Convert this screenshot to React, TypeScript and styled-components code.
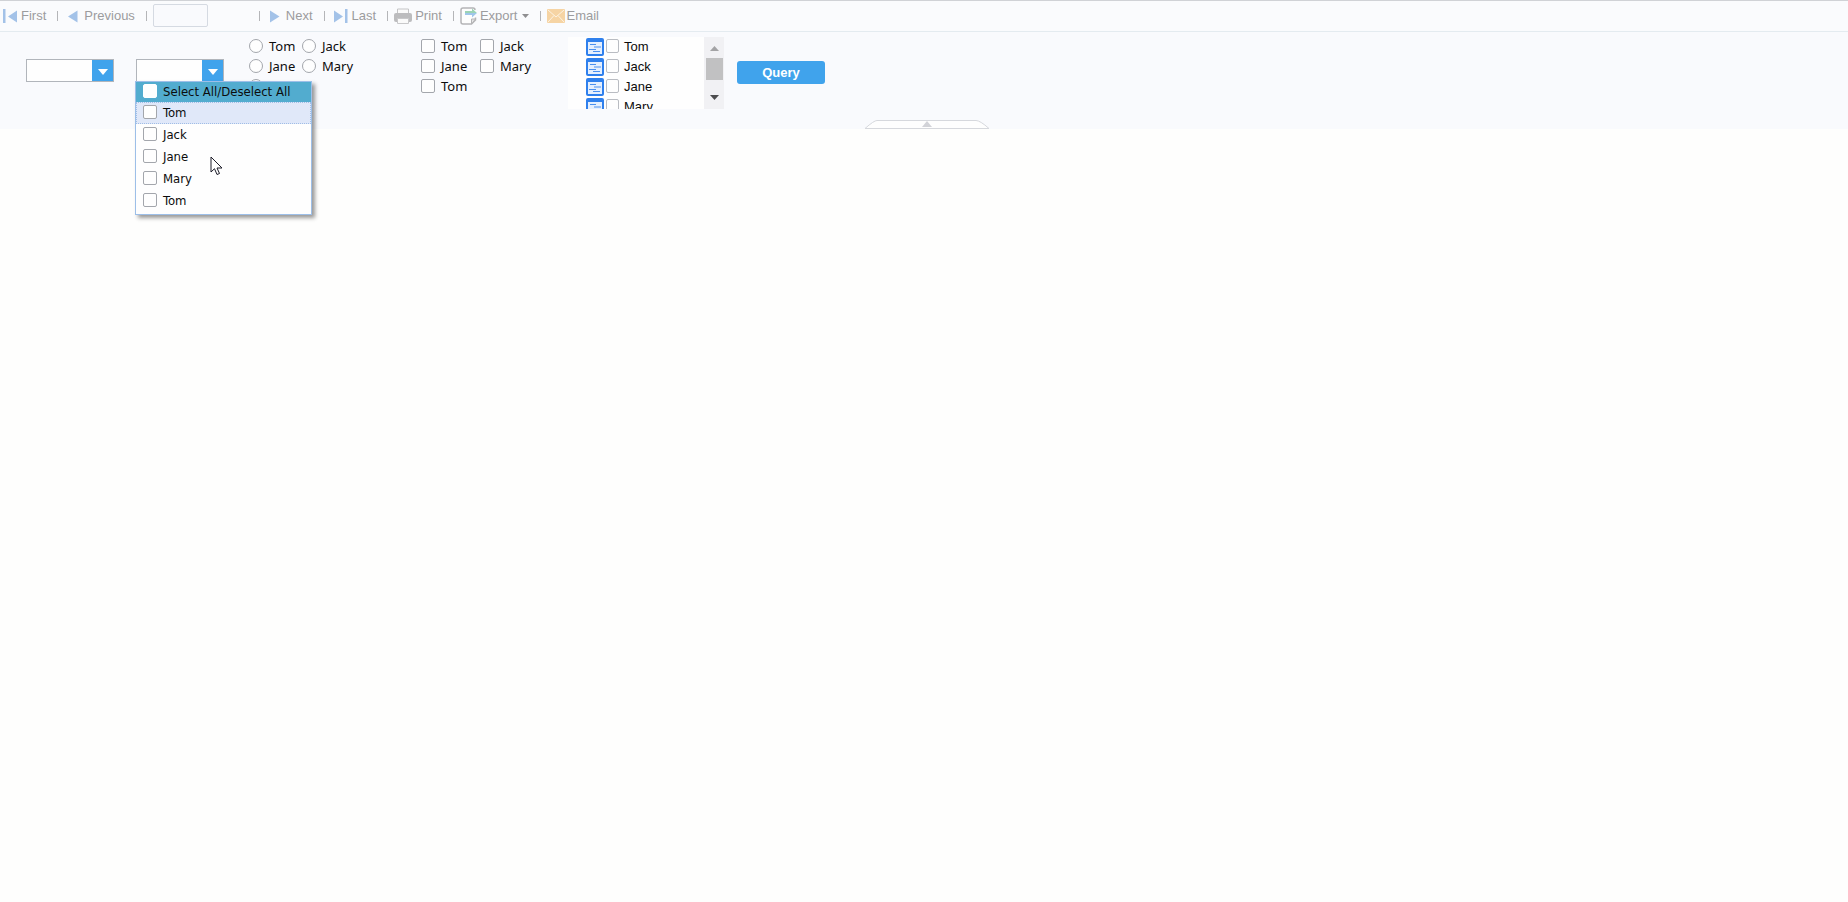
import React from "react";
import styled, { createGlobalStyle, css } from "styled-components";

const Global = createGlobalStyle`
  *, *::before, *::after { box-sizing: border-box; }
  body {
    margin: 0;
    background: #fefefd;
    color: #0c0c0c;
    font-family: "Liberation Sans", Arial, sans-serif;
    font-size: 13px;
  }
  button, input, select { font: inherit; margin: 0; padding: 0; }
`;

const Page = styled.main`
  min-height: 100vh;
`;

const Toolbar = styled.header`
  display: flex;
  align-items: center;
  height: 32px;
  padding-left: 3px;
  border-top: 1px solid #d0d2d6;
  border-bottom: 1px solid #e4ebf0;
  background: #fafbfd;
`;

const ToolButton = styled.button<{ $gap?: number }>`
  display: flex;
  align-items: center;
  gap: ${(p) => p.$gap ?? 4}px;
  height: 24px;
  border: 0;
  background: none;
  color: #9c9c9e;
  line-height: 16px;
  white-space: nowrap;
  svg { display: block; flex: none; }
`;

const Divider = styled.span<{ $after?: number }>`
  width: 1px;
  height: 10px;
  margin: 0 ${(p) => p.$after ?? 6}px 0 11px;
  background: #b4b5b8;
`;

const PageInput = styled.input`
  width: 55px;
  height: 23px;
  margin: 0 40px 2px 0;
  border: 1px solid #d5dae2;
  border-radius: 2px;
  background: #f9fafd;
`;

const Panel = styled.form`
  position: relative;
  display: flex;
  align-items: flex-start;
  height: 97px;
  padding: 5px 0 0 26px;
  background: #f9fafd;
`;

const Combo = styled.div`
  position: relative;
  width: 88px;
  margin: 22px 22px 0 0;
`;

const Select = styled.select`
  display: block;
  appearance: none;
  width: 100%;
  height: 23px;
  border: 1px solid #b1b5bb;
  border-radius: 0;
  background: #fefefe;
`;

const ComboArrow = styled.span`
  position: absolute;
  top: 1px;
  right: 1px;
  display: flex;
  align-items: center;
  justify-content: center;
  width: 21px;
  height: 21px;
  padding-top: 3px;
  background: #40a3ec;
  pointer-events: none;
`;

const Popup = styled.div`
  position: absolute;
  z-index: 2;
  top: 22px;
  left: -1px;
  width: 177px;
  height: 134px;
  border: 1px solid #9dbfe8;
  background: #fefefe;
  box-shadow: 3px 3px 4px rgba(0, 0, 0, 0.4);
`;

const PopupItem = styled.label<{ $kind?: "all" | "hover" }>`
  display: flex;
  align-items: center;
  gap: 6px;
  height: 22px;
  padding-left: 6px;
  font: 13px/16px "DejaVu Sans Condensed", "Noto Sans", sans-serif;
  white-space: nowrap;
  border: 1px solid transparent;
  input { margin-bottom: 3px; }
  ${(p) =>
    p.$kind === "all" &&
    css`
      height: 20px;
      background: #52accf;
      input { border-color: #fff; }
    `}
  ${(p) =>
    p.$kind === "hover" &&
    css`
      background: #e0e8f9;
      border: 1px dotted #a0bde6;
    `}
`;

const Check = styled.input`
  appearance: none;
  flex: none;
  width: 14px;
  height: 14px;
  border: 1px solid #a3a6ac;
  border-radius: ${(p) => (p.type === "radio" ? "50%" : "2px")};
  background: #fefefe;
`;

const OptionGrid = styled.fieldset<{ $cols: string; $width: number; $height: number }>`
  display: grid;
  grid-template-columns: ${(p) => p.$cols};
  grid-auto-rows: 20px;
  width: ${(p) => p.$width}px;
  height: ${(p) => p.$height}px;
  min-width: 0;
  margin: 0;
  padding: 0 0 0 3px;
  border: 0;
  overflow: hidden;
`;

const Option = styled.label`
  display: flex;
  align-items: center;
  gap: 6px;
  height: 19px;
  font: 13px/19px "Noto Sans", "Open Sans", sans-serif;
  white-space: nowrap;
  input { margin-bottom: 2px; }
`;

const Tree = styled.div`
  display: flex;
  width: 156px;
  height: 72px;
  overflow: hidden;
  background: #fefefe;
`;

const TreeList = styled.ul`
  flex: 1;
  margin: 0;
  padding: 0 0 0 18px;
  list-style: none;
`;

const TreeRow = styled.label`
  display: flex;
  align-items: center;
  height: 20px;
  line-height: 20px;
  svg { display: block; margin-right: 2px; }
  input { width: 13px; margin: 0 5px 2px 0; border-color: #b9bcc2; }
`;

const Scrollbar = styled.div`
  display: flex;
  flex-direction: column;
  align-items: center;
  width: 20px;
  background: #f1f1f4;
`;

const ScrollButton = styled.button<{ $dark?: boolean }>`
  display: flex;
  align-items: center;
  justify-content: center;
  width: 18px;
  height: 21px;
  padding-top: 2px;
  border: 0;
  background: none;
  color: ${(p) => (p.$dark ? "#4c4c4e" : "#a3a3a5")};
`;

const Thumb = styled.div`
  width: 17px;
  height: 22px;
  margin-bottom: 6px;
  background: #c1c1c2;
`;

const QueryButton = styled.button`
  width: 88px;
  height: 23px;
  margin: 24px 0 0 13px;
  border: 0;
  border-radius: 3px;
  background: #40a3ec;
  color: #fff;
  font-weight: bold;
`;

const Collapse = styled.button`
  position: absolute;
  bottom: 0;
  left: 50%;
  width: 126px;
  height: 9px;
  margin-left: -60px;
  border: 0;
  background: none;
  svg { display: block; }
`;

const Cursor = styled.svg`
  position: absolute;
  z-index: 3;
  top: 97px;
  left: 74px;
  pointer-events: none;
`;

const Triangle = ({ up }: { up?: boolean }) => (
  <svg width="9" height="5" viewBox="0 0 9 5" fill="currentColor">
    <path d={up ? "M0 5L4.500 0L9 5z" : "M0 0H9L4.500 5z"} />
  </svg>
);

const FirstIcon = () => (
  <svg width="14" height="14" fill="#a3c2e8">
    <path d="M0 0h2.500v14H0zM14 1.500v12L5 7.500z" />
  </svg>
);
const PrevIcon = () => (
  <svg width="10" height="14" fill="#a3c2e8"><path d="M9.500 1.500v12L0 7.500z" /></svg>
);
const NextIcon = () => (
  <svg width="10" height="14" fill="#a3c2e8"><path d="M0 1.500v12l9.500-6z" /></svg>
);
const LastIcon = () => (
  <svg width="15" height="14" fill="#a3c2e8">
    <path d="M1 1.500v12l9-6zM12 0h2.500v14H12z" />
  </svg>
);
const PrintIcon = () => (
  <svg width="18" height="16">
    <path d="M3.500 6V1h11v5" fill="#fafafa" stroke="#c4c4c6" />
    <rect x="0" y="5" width="18" height="9" rx="2" fill="#bcbcbe" />
    <path d="M3.500 10.500h11v5h-11z" fill="#fafafa" stroke="#c8c8ca" />
  </svg>
);
const ExportIcon = () => (
  <svg width="17" height="18" fill="none">
    <path d="M15.500 10.500V13l-4 4H3q-2 0-2-2V3q0-2 2-2h10q2 0 2 2" fill="#fdfdfd" stroke="#b4b4b6" strokeWidth="1.500" />
    <path d="M15.500 12h-4v5z" fill="#e4e4e5" stroke="#b4b4b6" />
    <path d="M5 4h7V1.500l5 4.500H5z" fill="#9bd3b4" />
    <path d="M5 6h12l-5 4.500V8H5z" fill="#9fc6ea" />
  </svg>
);
const MailIcon = () => (
  <svg width="18" height="14" fill="none">
    <rect width="18" height="14" rx="1" fill="#f6d4a4" />
    <path d="M1 1l8 7 8-7M1 13l6-6.500M17 13l-6-6.500" stroke="#fdf3e2" />
  </svg>
);
const NodeIcon = () => (
  <svg width="18" height="18">
    <rect width="18" height="18" rx="2" fill="#2f80ed" />
    <rect x="2" y="4" width="14" height="12" fill="#e4effe" />
    <path d="M4 6.500h6M8 9h7M3 11.500h7M7 13.500h7" stroke="#4a90ef" />
  </svg>
);

const names = ["Tom", "Jack", "Jane", "Mary", "Tom"];

export default function App() {
  return (
    <Page>
      <Global />
      <Toolbar>
        <ToolButton><FirstIcon />First</ToolButton>
        <Divider $after={10} />
        <ToolButton $gap={6}><PrevIcon />Previous</ToolButton>
        <Divider />
        <PageInput aria-label="Page number" />
        <Divider $after={10} />
        <ToolButton $gap={6}><NextIcon />Next</ToolButton>
        <Divider $after={8} />
        <ToolButton><LastIcon />Last</ToolButton>
        <Divider />
        <ToolButton $gap={3}><PrintIcon />Print</ToolButton>
        <Divider />
        <ToolButton $gap={3}>
          <ExportIcon />Export
          <svg width="9" height="6" fill="#8f8f91"><path d="M2 1h7L5.500 5z" /></svg>
        </ToolButton>
        <Divider />
        <ToolButton $gap={1}><MailIcon />Email</ToolButton>
      </Toolbar>

      <Panel onSubmit={(e) => e.preventDefault()}>
        <Combo>
          <Select aria-label="Name"><option></option></Select>
          <ComboArrow>
            <svg width="10" height="6" fill="#fff"><path d="M0 0h10L5 6z" /></svg>
          </ComboArrow>
        </Combo>
        <Combo>
          <Select aria-label="Names"><option></option></Select>
          <ComboArrow>
            <svg width="10" height="6" fill="#fff"><path d="M0 0h10L5 6z" /></svg>
          </ComboArrow>
          <Popup>
            <PopupItem $kind="all"><Check type="checkbox" />Select All/Deselect All</PopupItem>
            {names.map((n, i) => (
              <PopupItem key={i} $kind={i === 0 ? "hover" : undefined}>
                <Check type="checkbox" />{n}
              </PopupItem>
            ))}
          </Popup>
          <Cursor width="13" height="20" viewBox="0 0 13 20">
            <path d="M1 1v15l3.500-3.300L7 18.500l2.500-1L7 12h5z" fill="#fff" stroke="#1c1c28" />
          </Cursor>
        </Combo>

        <OptionGrid $cols="53px 1fr" $width={172} $height={45} aria-label="Single choice">
          {names.slice(0, 4).map((n, i) => (
            <Option key={i}><Check type="radio" name="person" />{n}</Option>
          ))}
          <Option><Check type="radio" name="person" aria-label="Tom" /></Option>
        </OptionGrid>
        <OptionGrid $cols="59px 1fr" $width={150} $height={60} aria-label="Multiple choice">
          {names.map((n, i) => (
            <Option key={i}><Check type="checkbox" />{n}</Option>
          ))}
        </OptionGrid>

        <Tree>
          <TreeList>
            {names.slice(0, 4).map((n, i) => (
              <li key={i}>
                <TreeRow><NodeIcon /><Check type="checkbox" />{n}</TreeRow>
              </li>
            ))}
          </TreeList>
          <Scrollbar>
            <ScrollButton type="button" aria-label="Scroll up"><Triangle up /></ScrollButton>
            <Thumb />
            <ScrollButton type="button" aria-label="Scroll down" $dark><Triangle /></ScrollButton>
          </Scrollbar>
        </Tree>

        <QueryButton type="submit">Query</QueryButton>
        <Collapse type="button" aria-label="Collapse panel">
          <svg width="126" height="9">
            <path d="M1 8.500Q10 .5 13 .5H112Q116 .5 125 8.500z" fill="#fefefe" stroke="#d6d8dd" />
            <path d="M58 7l5-6 5 6z" fill="#d2d3d8" />
          </svg>
        </Collapse>
      </Panel>
    </Page>
  );
}
